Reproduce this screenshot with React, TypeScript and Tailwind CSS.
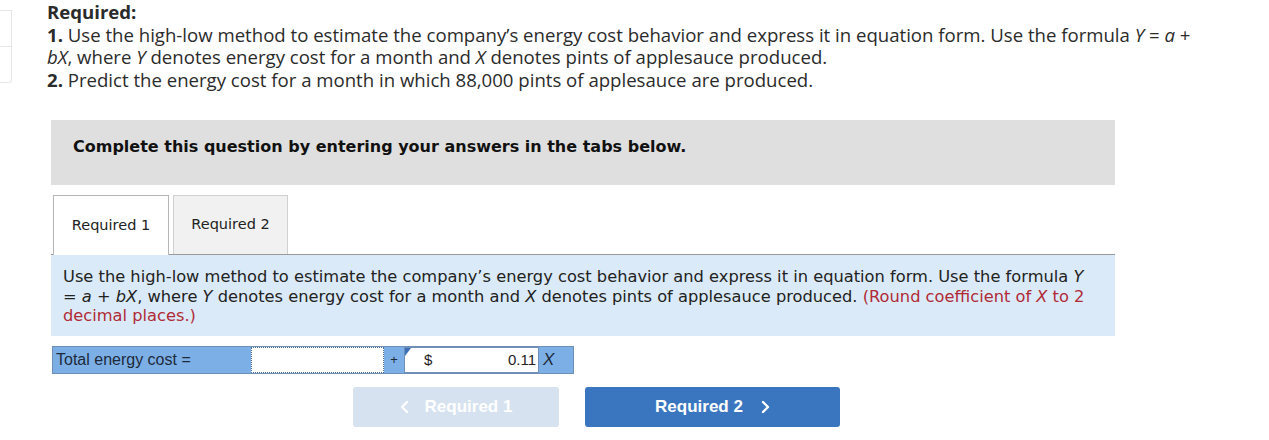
import React from 'react';

const proxima = { fontFamily: '"Open Sans", Lato, sans-serif' };
const verdana = { fontFamily: '"DejaVu Sans", Verdana, sans-serif' };
const arial = { fontFamily: '"Liberation Sans", Arial, sans-serif' };

function SideStub() {
  return (
    <div className="absolute left-0 top-[10px] w-[12px] h-[73px] border border-l-0 border-[#e6e6e6] rounded-br-[3px]">
      <div className="h-[36px] border-b border-[#e6e6e6]" />
    </div>
  );
}

function Header() {
  return (
    <div className="pl-[47px] pt-[1px] text-[18.6px] leading-[22.5px] text-[#2b2b2b]" style={proxima}>
      <div className="font-bold">Required:</div>
      <div className="whitespace-nowrap">
        <span className="font-bold">1.</span> Use the high-low method to estimate the company’s energy cost behavior and express it in equation form. Use the formula <i>Y</i> = <i>a</i> +
      </div>
      <div className="whitespace-nowrap">
        <i>bX</i>, where <i>Y</i> denotes energy cost for a month and <i>X</i> denotes pints of applesauce produced.
      </div>
      <div className="whitespace-nowrap">
        <span className="font-bold">2.</span> Predict the energy cost for a month in which 88,000 pints of applesauce are produced.
      </div>
    </div>
  );
}

function Tabs() {
  return (
    <div className="flex items-end h-[60px] pl-[2px] gap-[4px] border-b border-[#9a9a9a]">
      <div className="w-[116px] h-[60px] -mb-px bg-white border border-b-0 border-[#b5b5b5] flex items-center justify-center text-[14.5px] text-[#222]" style={verdana}>
        Required 1
      </div>
      <div className="w-[115px] h-[59px] bg-[#f1f1f1] border border-b-0 border-[#d0d0d0] flex items-center justify-center text-[14.5px] text-[#222]" style={verdana}>
        Required 2
      </div>
    </div>
  );
}

function AnswerRow() {
  return (
    <div className="flex h-[28px] w-[522px] border border-[#6f8fb6] bg-[#7cafe6]" style={arial}>
      <div className="w-[198px] flex items-center pl-[3px] text-[16px] text-[#1d2a3a]">Total energy cost =</div>
      <div className="w-[133px] bg-white border border-dotted border-[#4b6d96]" />
      <div className="w-[20px] flex items-center justify-center text-[13px] text-[#1d2a3a]">+</div>
      <div className="relative w-[135px] bg-white border border-[#6f8fb6] flex items-center justify-between px-[6px] text-[15px] text-[#222]">
        <span className="absolute left-0 top-0 w-0 h-0 border-t-[8px] border-t-[#3b70b8] border-r-[6px] border-r-transparent" />
        <span className="pl-[13px]">$</span>
        <span className="-mr-[4px]">0.11</span>
      </div>
      <div className="flex-1 flex items-center pl-[4px] text-[17px] italic text-[#1d2a3a]">X</div>
    </div>
  );
}

function NavButtons() {
  return (
    <div className="flex gap-[26px] pl-[353px] pt-[13px]" style={arial}>
      <button className="w-[206px] h-[40px] rounded-[3px] bg-[#d6e2ef] flex items-center justify-center gap-[16px] text-[17px] font-bold text-white">
        <svg width="9" height="14" viewBox="0 0 9 14" fill="none" stroke="white" strokeWidth="2.4" strokeLinecap="round" strokeLinejoin="round">
          <path d="M7 2 L2 7 L7 12" />
        </svg>
        <span>Required 1</span>
      </button>
      <button className="w-[255px] h-[40px] rounded-[3px] bg-[#3a76c0] flex items-center justify-center gap-[18px] text-[17px] font-bold text-white">
        <span>Required 2</span>
        <svg width="9" height="14" viewBox="0 0 9 14" fill="none" stroke="white" strokeWidth="2.4" strokeLinecap="round" strokeLinejoin="round">
          <path d="M2 2 L7 7 L2 12" />
        </svg>
      </button>
    </div>
  );
}

export default function App() {
  return (
    <div className="relative w-[1269px] h-[440px] bg-white overflow-hidden">
      <SideStub />
      <Header />
      <div className="ml-[51px] w-[1064px] mt-[29px]">
        <div className="h-[65px] bg-[#dfdfdf] pl-[22px] pt-[15px] text-[16px] font-bold text-[#111]" style={verdana}>
          Complete this question by entering your answers in the tabs below.
        </div>
        <div className="mt-[10px]">
          <Tabs />
        </div>
        <div className="bg-[#dbeaf8] h-[81px] pl-[12px] pt-[12px] text-[16.25px] leading-[19.5px] text-[#222]" style={verdana}>
          <div className="whitespace-nowrap">
            Use the high-low method to estimate the company’s energy cost behavior and express it in equation form. Use the formula <i>Y</i>
          </div>
          <div className="whitespace-nowrap">
            = <i>a</i> + <i>bX</i>, where <i>Y</i> denotes energy cost for a month and <i>X</i> denotes pints of applesauce produced. <span className="text-[#b02a37]">(Round coefficient of <i>X</i> to 2</span>
          </div>
          <div className="whitespace-nowrap text-[#b02a37]">decimal places.)</div>
        </div>
        <div className="mt-[10px] ml-[1px]">
          <AnswerRow />
        </div>
      </div>
      <NavButtons />
    </div>
  );
}
